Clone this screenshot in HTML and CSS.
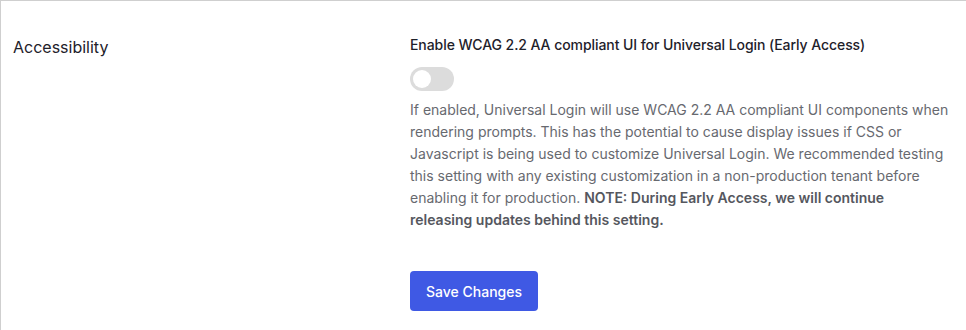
FILE: index.html
```html
<!DOCTYPE html>
<html>
<head>
<meta charset="utf-8">
<link rel="stylesheet" href="styles.css">
</head>
<body>
<div class="panel">
  <div class="section">
    <h2 class="section-title">Accessibility</h2>
    <div class="section-body">
      <div class="field-label">Enable WCAG 2.2 AA compliant UI for Universal Login (Early Access)</div>
      <div class="toggle"><span class="knob"></span></div>
      <p class="help">If enabled, Universal Login will use WCAG 2.2 AA compliant UI components when rendering prompts. This has the potential to cause display issues if CSS or Javascript is being used to customize Universal Login. We recommended testing this setting with any existing customization in a non-production tenant before enabling it for production. <strong>NOTE: During Early Access, we will continue releasing updates behind this setting.</strong></p>
      <button class="btn-primary">Save Changes</button>
    </div>
  </div>
</div>
</body>
</html>
```
FILE: styles.css
```css
html, body {
  margin: 0;
  padding: 0;
  background: #fff;
}
body {
  font-family: Inter, "Noto Sans", sans-serif;
  color: #1e212a;
  width: 966px;
  height: 330px;
  overflow: hidden;
}
.panel {
  border-top: 1px solid #cfcfcf;
  border-left: 1px solid #cfcfcf;
  height: 330px;
  box-sizing: border-box;
}
.section {
  display: grid;
  grid-template-columns: 397px 538.5px;
  padding: 34px 0 0 12px;
}
.section-title {
  margin: 0;
  font-size: 16px;
  font-weight: 400;
  line-height: 24px;
  color: #1e212a;
}
.section-body {
  display: flex;
  flex-direction: column;
  align-items: flex-start;
}
.field-label {
  font-size: 14px;
  font-weight: 500;
  line-height: 20px;
  color: #1e212a;
  letter-spacing: -0.005em;
}
.toggle {
  margin-top: 12px;
  width: 44px;
  height: 24px;
  border-radius: 12px;
  background: #dcdcdc;
  display: flex;
  align-items: center;
  padding: 0 3px;
  box-sizing: border-box;
}
.knob {
  width: 18px;
  height: 18px;
  border-radius: 50%;
  background: #fff;
}
.help {
  margin: 8px 0 0;
  font-size: 14px;
  line-height: 22px;
  color: #67696f;
}
.help strong {
  font-weight: 600;
  color: #55575e;
}
.btn-primary {
  margin-top: 40px;
  height: 40px;
  padding: 0 16px;
  border: none;
  border-radius: 4px;
  background: #3f59e4;
  color: #fff;
  font-family: Inter, "Noto Sans", sans-serif;
  font-size: 14px;
  font-weight: 500;
}
```
